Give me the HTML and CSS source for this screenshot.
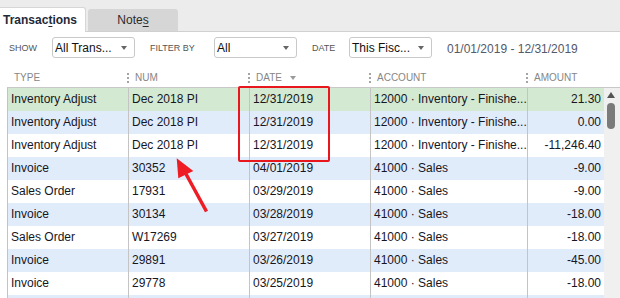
FILE: index.html
```html
<!DOCTYPE html>
<html>
<head>
<meta charset="utf-8">
<link rel="stylesheet" href="styles.css">
</head>
<body>
<div class="page">
  <div class="tabbar">
    <div class="tab active">Transac<u>t</u>ions</div>
    <div class="tab">Note<u>s</u></div>
  </div>
  <div class="filters">
    <span class="flabel w-show">SHOW</span>
    <div class="select"><span>All Trans...</span><i class="caret"></i></div>
    <span class="flabel w-filter">FILTER BY</span>
    <div class="select"><span>All</span><i class="caret"></i></div>
    <span class="flabel w-date">DATE</span>
    <div class="select"><span>This Fisc...</span><i class="caret"></i></div>
    <span class="range">01/01/2019 - 12/31/2019</span>
  </div>
  <div class="thead">
    <div class="th first">TYPE</div>
    <div class="th"><i class="grip"></i>NUM</div>
    <div class="th"><i class="grip"></i>DATE<i class="sort"></i></div>
    <div class="th"><i class="grip"></i>ACCOUNT</div>
    <div class="th"><i class="grip"></i>AMOUNT</div>
  </div>
  <div class="tablewrap">
    <div class="rows">
      <div class="row green"><div>Inventory Adjust</div><div>Dec 2018 PI</div><div>12/31/2019</div><div>12000 · Inventory - Finishe...</div><div class="num">21.30</div></div>
      <div class="row blue"><div>Inventory Adjust</div><div>Dec 2018 PI</div><div>12/31/2019</div><div>12000 · Inventory - Finishe...</div><div class="num">0.00</div></div>
      <div class="row"><div>Inventory Adjust</div><div>Dec 2018 PI</div><div>12/31/2019</div><div>12000 · Inventory - Finishe...</div><div class="num">-11,246.40</div></div>
      <div class="row blue"><div>Invoice</div><div>30352</div><div>04/01/2019</div><div>41000 · Sales</div><div class="num">-9.00</div></div>
      <div class="row"><div>Sales Order</div><div>17931</div><div>03/29/2019</div><div>41000 · Sales</div><div class="num">-9.00</div></div>
      <div class="row blue"><div>Invoice</div><div>30134</div><div>03/28/2019</div><div>41000 · Sales</div><div class="num">-18.00</div></div>
      <div class="row"><div>Sales Order</div><div>W17269</div><div>03/27/2019</div><div>41000 · Sales</div><div class="num">-18.00</div></div>
      <div class="row blue"><div>Invoice</div><div>29891</div><div>03/26/2019</div><div>41000 · Sales</div><div class="num">-45.00</div></div>
      <div class="row"><div>Invoice</div><div>29778</div><div>03/25/2019</div><div>41000 · Sales</div><div class="num">-18.00</div></div>
      <div class="row blue"><div></div><div></div><div></div><div></div><div class="num"></div></div>
    </div>
    <div class="scrollbar"><i class="up"></i><i class="thumb"></i></div>
  </div>
  <div class="redbox"></div>
  <svg class="arrow" width="620" height="298" viewBox="0 0 620 298">
    <line x1="206.5" y1="211.5" x2="186" y2="174" stroke="#ee1c24" stroke-width="3.5" stroke-linecap="butt"/>
    <polygon points="176.7,158.3 178.3,178.3 193.3,171" fill="#ee1c24"/>
  </svg>
</div>
</body>
</html>
```
FILE: styles.css
```css
* { box-sizing: border-box; }
html, body { margin: 0; padding: 0; background: #fff; }
body { font-family: "Liberation Sans", Arial, sans-serif; font-size: 12px; color: #16161f; }
.page { position: relative; width: 620px; height: 298px; overflow: hidden; }

.tabbar {
  height: 32px;
  background: #ececec;
  border-bottom: 1px solid #d0d0d0;
  display: flex;
  align-items: flex-end;
}
.tab {
  height: 22px;
  width: 90px;
  margin-left: 2px;
  margin-bottom: 0;
  background: #d6d6d6;
  border-radius: 3px 3px 0 0;
  font-size: 12px;
  color: #2b2b2b;
  display: flex;
  align-items: center;
  justify-content: center;
}
.tab.active {
  width: 86px;
  height: 25px;
  margin-left: 0;
  margin-bottom: -1px;
  background: #fff;
  border-top: 1px solid #d6d6d6;
  border-right: 1px solid #d6d6d6;
  border-radius: 0 3px 0 0;
  font-weight: bold;
  color: #1f2a38;
  justify-content: flex-start;
  padding-left: 3px;
  padding-bottom: 1px;
}
.tab u { text-decoration: underline; text-underline-offset: 2px; }

.filters {
  height: 35px;
  padding: 5px 0 0 9px;
  display: flex;
  align-items: flex-start;
}
.flabel {
  font-size: 9px;
  color: #555;
  height: 21px;
  line-height: 22px;
}
.w-show { width: 43px; }
.w-filter { width: 64px; margin-left: 15px; }
.w-date { width: 37px; margin-left: 15px; }
.select {
  width: 83px;
  height: 21px;
  border: 1px solid #c9c9c9;
  border-radius: 3px;
  background: #fff;
  display: flex;
  align-items: center;
  justify-content: space-between;
  padding: 0 7px 0 2px;
  font-size: 12px;
  color: #111;
}
.caret {
  width: 0; height: 0;
  border-left: 3.5px solid transparent;
  border-right: 3.5px solid transparent;
  border-top: 4px solid #666;
  margin-top: 1px;
}
.range {
  margin-left: 15px;
  height: 21px;
  line-height: 24px;
  font-size: 12px;
  color: #535a6a;
}

.thead {
  margin-left: 7px;
  height: 20px;
  display: grid;
  grid-template-columns: 121px 121px 121px 157px 77px;
}
.th {
  display: flex;
  align-items: center;
  font-size: 10px;
  color: #868686;
  padding-top: 1px;
}
.th.first { padding-left: 7px; }
.grip {
  width: 2px;
  height: 10px;
  margin-left: -1px;
  margin-right: 6px;
  background: repeating-linear-gradient(to bottom, #a4a4a4 0 2px, transparent 2px 4px);
}
.sort {
  width: 0; height: 0;
  margin-left: 8px;
  border-left: 3.5px solid transparent;
  border-right: 3.5px solid transparent;
  border-top: 4px solid #9a9a9a;
}

.tablewrap {
  display: flex;
  border-top: 1px solid #c8c8c8;
  margin-left: 7px;
}
.rows { width: 597px; }
.row {
  display: grid;
  grid-template-columns: 121px 121px 121px 157px 77px;
  height: 23px;
  background: #fff;
}
.row.green { background: #d4e9d1; }
.row.blue { background: #e1ecfb; }
.row > div {
  border-left: 1px solid #c4c4c4;
  padding-left: 3px;
  line-height: 23px;
  white-space: nowrap;
  overflow: hidden;
}
.row > .num { text-align: right; padding-right: 3px; padding-left: 0; }

.scrollbar {
  width: 16px;
  background: #f0f0f0;
  display: flex;
  flex-direction: column;
  padding-left: 3px;
}
.up {
  width: 0; height: 0;
  margin-top: 4px;
  border-left: 4px solid transparent;
  border-right: 4px solid transparent;
  border-bottom: 6px solid #555;
}
.thumb {
  width: 8px;
  height: 26px;
  margin-top: 5px;
  background: #7b7b7b;
  border-radius: 4px;
}

.redbox {
  position: absolute;
  left: 238px;
  top: 86px;
  width: 92px;
  height: 76px;
  border: 2px solid #e8161d;
  border-radius: 2px;
}
.arrow { position: absolute; left: 0; top: 0; pointer-events: none; }
```
